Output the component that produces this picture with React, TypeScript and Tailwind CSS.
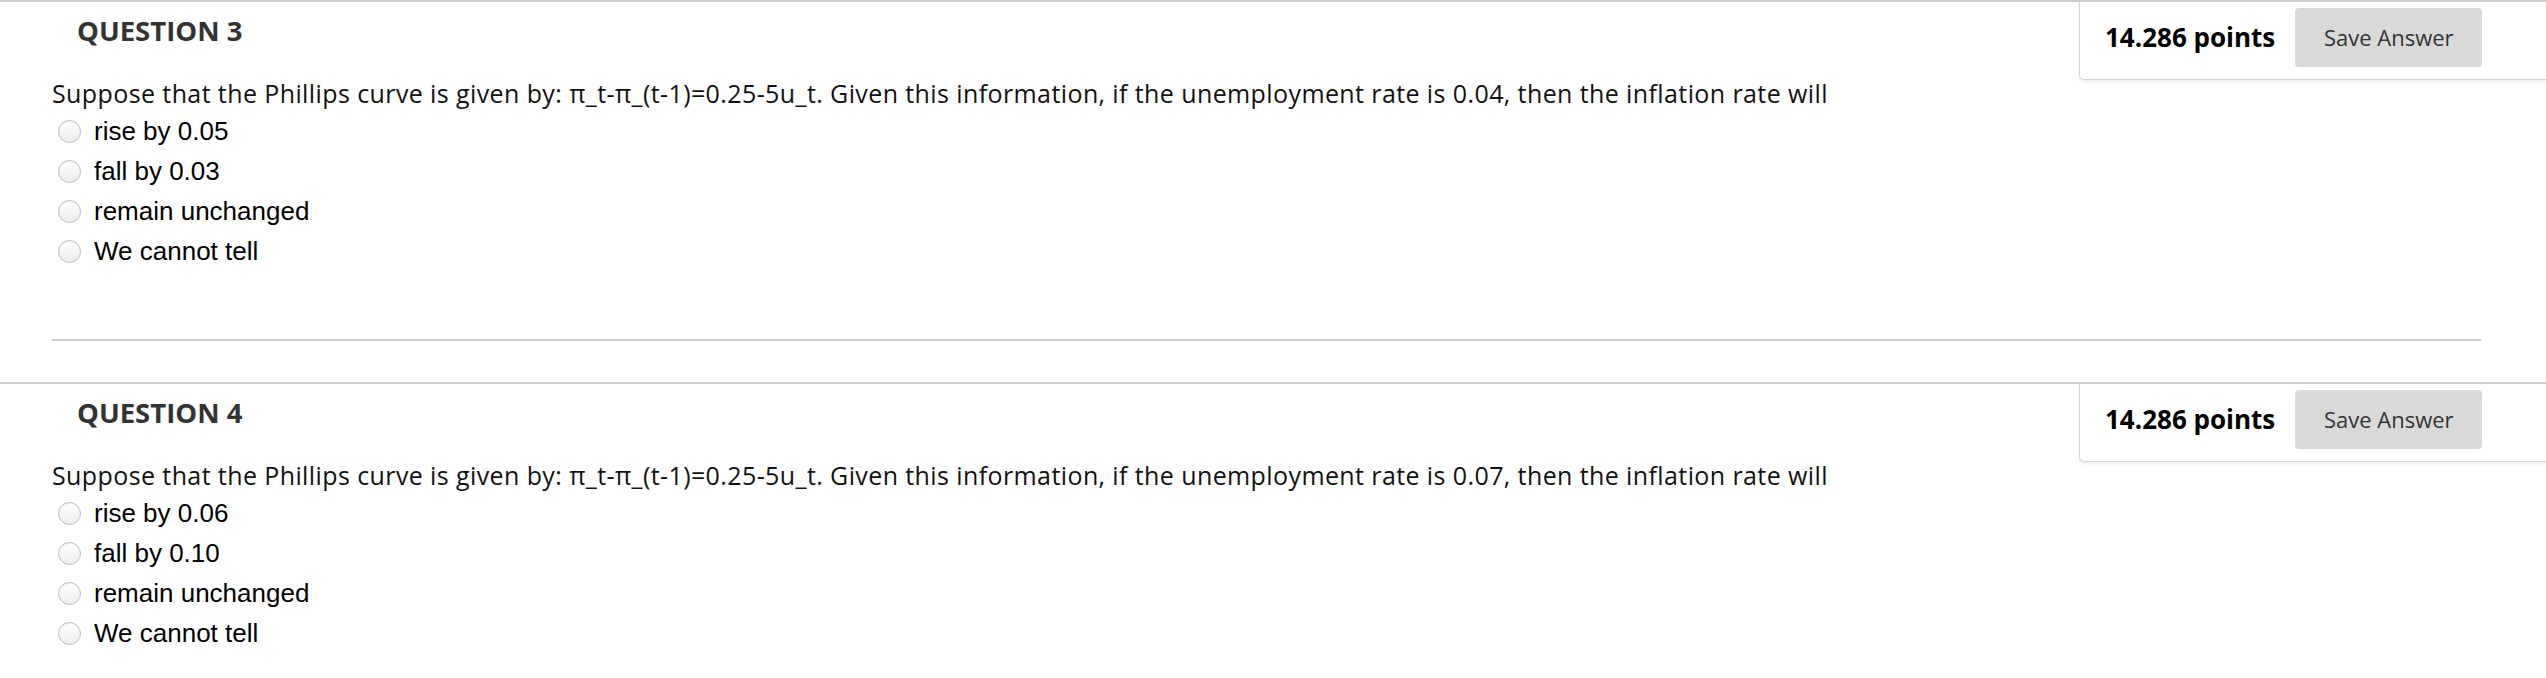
const questions = [
  {
    num: 3,
    rate: "0.04",
    options: ["rise by 0.05", "fall by 0.03", "remain unchanged", "We cannot tell"],
  },
  {
    num: 4,
    rate: "0.07",
    options: ["rise by 0.06", "fall by 0.10", "remain unchanged", "We cannot tell"],
  },
];

function Radio() {
  return (
    <span className="block w-[23px] h-[23px] rounded-full border border-[#bdbdbd] bg-[linear-gradient(#ffffff,#ececec)] shadow-[inset_0_1px_1px_rgba(0,0,0,0.06)]" />
  );
}

function Question({ num, rate, options }: { num: number; rate: string; options: string[] }) {
  return (
    <section className="border-t-2 border-[#cccccc] h-[382px]">
      <div className="flex items-start">
        {/* Left: heading, prompt, choices */}
        <div className="flex-1 min-w-0">
          <h2 className="pt-[11px] pl-[77px] text-[27.5px] leading-[36px] font-bold text-[#333333] [font-family:'Open_Sans',sans-serif]">
            QUESTION {num}
          </h2>
          <p className="mt-[27px] pl-[52px] text-[25px] tracking-[0.4px] leading-[34px] text-[#111111] whitespace-nowrap [font-family:'Open_Sans',sans-serif]">
            Suppose that the Phillips curve is given by: π_t-π_(t-1)=0.25-5u_t. Given this information, if the
            unemployment rate is {rate}, then the inflation rate will
          </p>
          <ul className="mt-[1px] pl-[58px]">
            {options.map((o) => (
              <li key={o} className="flex items-center h-[40px] gap-[13px]">
                <Radio />
                <span className="text-[26px] text-black [font-family:'Liberation_Sans',Arial,sans-serif]">{o}</span>
              </li>
            ))}
          </ul>
        </div>

        {/* Right: points + save */}
        <div className="w-[467px] shrink-0 h-[78px] border-l border-b border-[#d4d4d4] rounded-bl-[5px] shadow-[0_2px_3px_rgba(0,0,0,0.08)] flex items-start pt-[6px] pl-[25px] gap-[20px] [font-family:'Open_Sans',sans-serif]">
          <span className="leading-[59px] text-[26px] font-bold text-black">14.286 points</span>
          <button className="h-[59px] w-[187px] rounded-[4px] bg-[#d9d9d9] text-[22px] text-[#333333]">
            Save Answer
          </button>
        </div>
      </div>
      <div className="mt-[68px] ml-[52px] mr-[65px] h-[2px] bg-[#cccccc]" />
    </section>
  );
}

export default function App() {
  return (
    <div className="w-[2546px] h-[678px] overflow-hidden bg-white">
      {questions.map((q) => (
        <Question key={q.num} {...q} />
      ))}
    </div>
  );
}
